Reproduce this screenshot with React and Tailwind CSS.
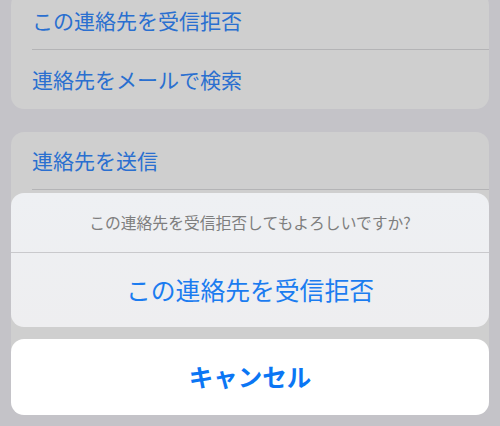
import React from 'react';

const font = { fontFamily: '"Noto Sans CJK JP", "Noto Sans", sans-serif' };

const ListRow = ({ label, divider }) => (
  <div className={`h-[58px] flex items-center pl-[21px] ${divider ? 'relative' : ''}`}>
    <span className="text-[21px] text-[#2a6fd0]">{label}</span>
    {divider && <div className="absolute left-[21px] right-0 bottom-0 h-px bg-[#b4b4b6]" />}
  </div>
);

const App = () => {
  return (
    <div className="relative w-[500px] h-[426px] overflow-hidden bg-[#c4c3c8]" style={font}>
      <div className="px-[11px]">
        <div className="-mt-[8px] bg-[#cfcfcf] rounded-[13px] overflow-hidden">
          <ListRow label="この連絡先を受信拒否" divider />
          <div className="h-px" />
          <ListRow label="連絡先をメールで検索" />
        </div>

        <div className="mt-[23px] h-[230px] bg-[#cfcfcf] rounded-[13px] overflow-hidden">
          <ListRow label="連絡先を送信" divider />
        </div>
      </div>

      {/* action sheet */}
      <div className="absolute left-[11px] right-[11px] bottom-[11px] flex flex-col gap-[12px]">
        <div className="rounded-[13px] overflow-hidden bg-gradient-to-b from-[#eef0f3] to-[#eeeef0]">
          <div className="h-[59px] flex items-center justify-center">
            <span className="text-[15.8px] text-[#7e7e7e]">この連絡先を受信拒否してもよろしいですか?</span>
          </div>
          <div className="h-px bg-[#c9c9cc]" />
          <div className="h-[74px] flex items-center justify-center">
            <span className="text-[24.8px] text-[#1b7cf0]">この連絡先を受信拒否</span>
          </div>
        </div>
        <div className="h-[76px] rounded-[13px] bg-white flex items-center justify-center">
          <span className="text-[24.5px] font-bold text-[#0b76f4]">キャンセル</span>
        </div>
      </div>
    </div>
  );
};

export default App;
